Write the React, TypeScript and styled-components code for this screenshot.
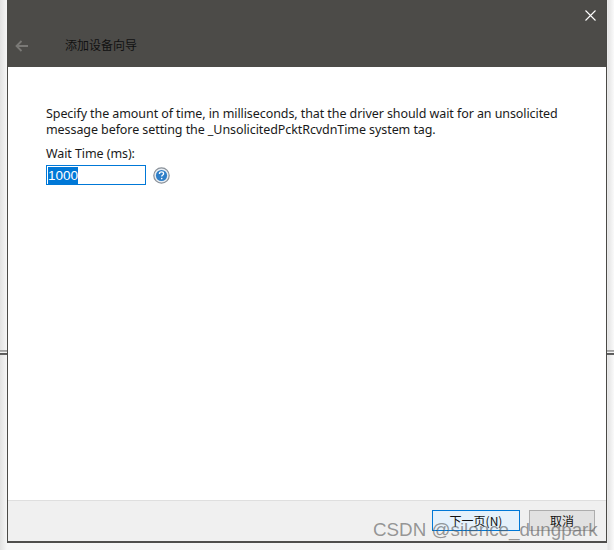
import React from "react";
import styled, { createGlobalStyle } from "styled-components";

const Global = createGlobalStyle`
  html, body { margin: 0; padding: 0; }
  body { font-family: "Noto Sans", "Noto Sans CJK SC", sans-serif; }
`;

const Desktop = styled.div`
  position: relative;
  width: 614px;
  height: 550px;
  overflow: hidden;
  box-sizing: border-box;
  padding: 0 7px 7px 7px;
  background:
    linear-gradient(to bottom, transparent 350px, #9a9a9a 350px, #b5b5b5 352px, #f4f4f4 352px, #f4f4f4 353px, #555 353px, #666 355px, transparent 355px),
    linear-gradient(to right, #e2e2e2, #f6f6f6 7px, #f2f2f2 607px, #e4e4e4 608px, #fafafa 614px);
`;

const Window = styled.div`
  width: 600px;
  height: 543px;
  box-sizing: border-box;
  display: flex;
  flex-direction: column;
  background: #fff;
  border-left: 1px solid #4a4946;
  border-right: 1px solid #4a4946;
  border-bottom: 2px solid #4f4e4c;
`;

const TitleBar = styled.div`
  height: 67px;
  flex: none;
  box-sizing: border-box;
  background: #4c4b48;
  display: flex;
  flex-direction: column;
  padding: 10px 10px 0 7px;
`;

const CloseRow = styled.div`
  display: flex;
  justify-content: flex-end;
  height: 11px;
  color: #fff;
`;

const NavRow = styled.div`
  display: flex;
  align-items: center;
  margin-top: 17px;
  height: 16px;
`;

const BackIcon = styled.svg`
  width: 13px;
  height: 12px;
  margin-right: 37px;
  flex: none;
`;

const Title = styled.div`
  font-size: 12px;
  line-height: 16px;
  color: #111;
`;

const Content = styled.div`
  flex: 1;
  padding: 39px 38px 0;
  font-size: 12.5px;
  letter-spacing: -0.08px;
  line-height: 16px;
  color: #1a1a1a;
`;

const Description = styled.p`
  margin: 0;
  white-space: nowrap;
`;

const FieldLabel = styled.div`
  margin-top: 8px;
  line-height: 16px;
`;

const FieldRow = styled.div`
  display: flex;
  align-items: center;
  margin-top: 3px;
`;

const InputBox = styled.div`
  width: 100px;
  height: 20px;
  box-sizing: border-box;
  border: 1px solid #0078d7;
  background: #fff;
  padding: 1px 0 0 1px;
  display: flex;
  align-items: flex-start;
  font-family: "Liberation Sans", sans-serif;
  font-size: 13.5px;
  letter-spacing: 0;
  line-height: 17px;
`;

const Selected = styled.span`
  background: #0078d7;
  color: #fff;
`;

const HelpIcon = styled.svg`
  width: 17px;
  height: 17px;
  margin-left: 7px;
`;

const Footer = styled.div`
  height: 41px;
  flex: none;
  box-sizing: border-box;
  background: #f0f0f0;
  border-top: 1px solid #dfdfdf;
  display: flex;
  justify-content: flex-end;
  align-items: flex-start;
  gap: 9px;
  padding: 9px 11px 0 0;
`;

const Button = styled.button<{ $primary?: boolean }>`
  height: 21px;
  box-sizing: border-box;
  padding: 0;
  width: ${(p) => (p.$primary ? "88px" : "66px")};
  font-family: "Noto Sans CJK SC", "Liberation Sans", sans-serif;
  font-size: 12px;
  line-height: 19px;
  color: #111;
  background: ${(p) => (p.$primary ? "#e5f1fb" : "#e1e1e1")};
  border: 1px solid ${(p) => (p.$primary ? "#0078d7" : "#adadad")};
`;

const Watermark = styled.div`
  position: absolute;
  left: 373px;
  top: 518px;
  font-family: "Liberation Sans", sans-serif;
  font-size: 18.8px;
  line-height: 24px;
  color: rgba(90, 90, 90, 0.62);
  white-space: nowrap;
`;

export default function App() {
  return (
    <Desktop>
      <Global />
      <Window>
        <TitleBar>
          <CloseRow>
            <svg width="11" height="11" viewBox="0 0 11 11" fill="none" stroke="#fff" strokeWidth="1.1">
              <path d="M.5.5l10 10M10.5.5l-10 10" />
            </svg>
          </CloseRow>
          <NavRow>
            <BackIcon viewBox="0 0 13 12" fill="none" stroke="#7a7976" strokeWidth="1.8">
              <path d="M13 6H1.5M6.5 1 1.5 6l5 5" />
            </BackIcon>
            <Title>添加设备向导</Title>
          </NavRow>
        </TitleBar>
        <Content>
          <Description>
            Specify the amount of time, in milliseconds, that the driver should wait for an unsolicited
            <br />
            message before setting the _UnsolicitedPcktRcvdnTime system tag.
          </Description>
          <FieldLabel>Wait Time (ms):</FieldLabel>
          <FieldRow>
            <InputBox>
              <Selected>1000</Selected>
            </InputBox>
            <HelpIcon viewBox="0 0 17 17">
              <circle cx="8.5" cy="8.5" r="7.7" fill="#e8eef4" stroke="#8a9199" strokeWidth="1.2" />
              <circle cx="8.5" cy="8.5" r="5.6" fill="#2f7fc8" />
              <path d="M6.4 7c0-1.4 1-2.1 2.2-2.1s2 .8 2 1.8c0 1.3-1.9 1.5-1.9 2.8" fill="none" stroke="#fff" strokeWidth="1.3" />
              <circle cx="8.7" cy="11.6" r=".8" fill="#fff" />
            </HelpIcon>
          </FieldRow>
        </Content>
        <Footer>
          <Button $primary>下一页(N)</Button>
          <Button>取消</Button>
        </Footer>
      </Window>
      <Watermark>CSDN @silence_dungpark</Watermark>
    </Desktop>
  );
}
